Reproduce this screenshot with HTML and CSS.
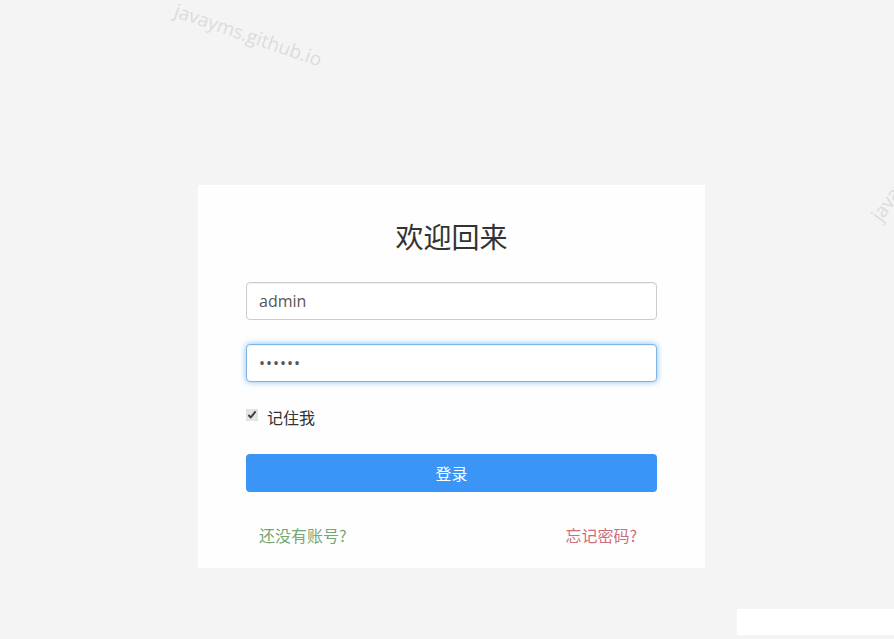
FILE: index.html
```html
<!DOCTYPE html>
<html lang="zh-CN">
<head>
<meta charset="utf-8">
<title>登录</title>
<link rel="stylesheet" href="styles.css">
</head>
<body>
<div class="watermark wm-1">javayms.github.io</div>
<div class="watermark wm-2">javayms.github.io</div>
<main class="page">
  <form class="card">
    <h1 class="title">欢迎回来</h1>
    <input class="field" type="text" value="admin">
    <input class="field field-focus" type="password" value="123456">
    <label class="remember"><input class="check" type="checkbox" checked><span>记住我</span></label>
    <button class="btn" type="button">登录</button>
    <div class="links">
      <a class="link-reg" href="#">还没有账号?</a>
      <a class="link-forgot" href="#">忘记密码?</a>
    </div>
  </form>
</main>
<div class="corner-box"></div>
</body>
</html>
```

FILE: styles.css
```css
html, body {
  margin: 0;
  padding: 0;
}
body {
  background: #f4f4f4;
  font-family: "Open Sans", "Noto Sans CJK SC", sans-serif;
  color: #333;
  width: 894px;
  height: 639px;
  overflow: hidden;
  position: relative;
}
.watermark {
  position: absolute;
  color: #dcdcdc;
  font-family: "Open Sans", sans-serif;
  font-size: 19px;
  white-space: nowrap;
  transform-origin: left bottom;
}
.wm-1 {
  left: 171px;
  top: -4px;
  transform: rotate(19deg);
}
.wm-2 {
  left: 886px;
  top: 200px;
  transform: rotate(-55deg);
}
.page {
  padding-top: 185px;
  padding-left: 198px;
}
.card {
  width: 507px;
  box-sizing: border-box;
  background: #fefefe;
  padding: 31px 48px 21px;
  display: flex;
  flex-direction: column;
}
.title {
  margin: 0 0 26px;
  font-family: "Noto Sans CJK SC", sans-serif;
  font-weight: 400;
  font-size: 28px;
  line-height: 40px;
  text-align: center;
  color: #333;
}
.field {
  height: 38px;
  box-sizing: border-box;
  border: 1px solid #ccc;
  border-radius: 4px;
  padding: 0 12px;
  font-family: "Open Sans", "Noto Sans CJK SC", sans-serif;
  font-size: 16px;
  color: #555;
  background: #fff;
  box-shadow: inset 0 1px 1px rgba(0,0,0,0.06);
  margin: 0 0 24px;
  outline: none;
}
.field-focus {
  border-color: #7fb4e8;
  box-shadow: inset 0 1px 1px rgba(0,0,0,0.06), 0 0 6px rgba(102,175,233,0.8);
  margin-bottom: 23px;
  letter-spacing: 1px;
}
.remember {
  display: flex;
  align-items: center;
  height: 24px;
  font-family: "Noto Sans CJK SC", sans-serif;
  font-size: 16px;
  color: #333;
  margin-bottom: 25px;
}
.check {
  width: 12px;
  height: 12px;
  margin: 0 9px 5px 0;
  accent-color: #e4e4e4;
}
.btn {
  height: 38px;
  border: none;
  border-radius: 4px;
  background: #3a95f6;
  color: #fff;
  font-family: "Noto Sans CJK SC", sans-serif;
  font-size: 16px;
  cursor: pointer;
  margin-bottom: 31px;
}
.links {
  display: flex;
  justify-content: space-between;
  padding: 0 20px 0 13px;
  font-family: "Noto Sans CJK SC", sans-serif;
  font-size: 16px;
  line-height: 24px;
}
.links a {
  text-decoration: none;
}
.link-reg {
  color: #72a972;
}
.link-forgot {
  color: #cc6f7c;
}
.corner-box {
  position: absolute;
  left: 737px;
  top: 609px;
  width: 157px;
  height: 26px;
  background: #fff;
}
```
